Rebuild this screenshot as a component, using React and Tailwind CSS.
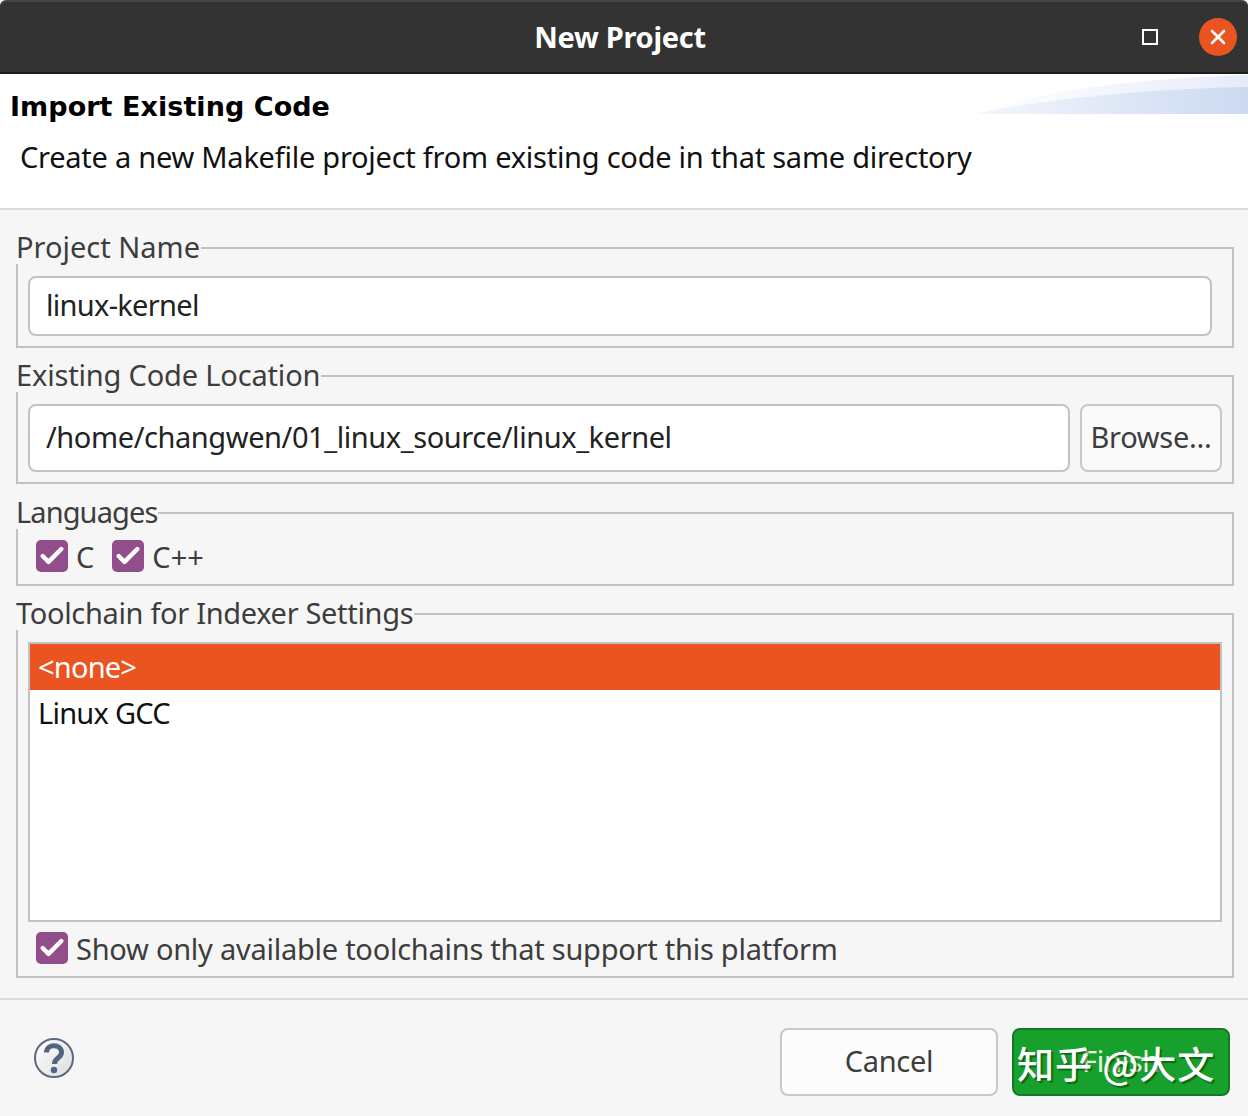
import React from 'react';
import { X, Check } from 'lucide-react';

const ui = "font-['Noto_Sans','Noto_Sans_CJK_SC',sans-serif]";

const Group = ({ title, className = '', titleClass = '', children }) => (
  <fieldset className={`border-2 border-[#c2c2c2] ${className}`}>
    <legend className={`relative -ml-0.5 h-8 bg-[#f6f6f6] pr-px text-[29px] leading-[30px] text-[#3d3d3d] ${titleClass}`}>{title}</legend>
    {children}
  </fieldset>
);

const CheckBox = ({ label, labelClass = '' }) => (
  <div className="flex h-8 items-center gap-2">
    <div className="flex h-8 w-8 items-center justify-center rounded-[5px] bg-[#924d8b]">
      <Check size={28} strokeWidth={3.8} color="#ffffff" />
    </div>
    <span className={`h-8 text-[29px] leading-[33px] text-[#3d3d3d] ${labelClass}`}>{label}</span>
  </div>
);

const App = () => {
  return (
    <div className={`relative h-[1116px] w-[1248px] overflow-hidden bg-[#f6f6f6] ${ui}`}>
      {/* title bar */}
      <div className="flex h-[74px] items-center rounded-t-[6px] border-t-2 border-b-2 border-t-[#464646] border-b-[#1d1d1d] bg-[#333333]">
        <div className="w-[110px]" />
        <div className="flex-1 text-center text-[29px] font-bold tracking-[-0.3px] text-white">New Project</div>
        <div className="flex w-[118px] items-center justify-between pr-[11px] pl-3">
          <div className="h-4 w-4 border-2 border-white" />
          <div className="flex h-[38px] w-[38px] items-center justify-center rounded-full bg-[#e95420]">
            <X size={24} strokeWidth={2.6} color="#ffffff" />
          </div>
        </div>
      </div>

      {/* wizard header */}
      <div className="relative h-[136px] border-b-2 border-[#dcdcdc] bg-white">
        <svg className="absolute top-0 right-0" width="273" height="40" viewBox="0 0 273 40">
          <defs>
            <linearGradient id="bannerTop" x1="0" x2="1" y1="0" y2="0">
              <stop offset="0" stopColor="#ffffff" />
              <stop offset="1" stopColor="#e6ecf8" />
            </linearGradient>
            <linearGradient id="bannerLow" x1="0" x2="1" y1="0" y2="0">
              <stop offset="0" stopColor="#f4f6fc" />
              <stop offset="1" stopColor="#ccd9f1" />
            </linearGradient>
          </defs>
          <path d="M0 40 C60 18 160 4 273 1 V40 Z" fill="url(#bannerTop)" />
          <path d="M0 40 C70 25 170 15 273 13 V40 Z" fill="url(#bannerLow)" />
        </svg>
        <div className="absolute top-[17px] left-[10px] font-['DejaVu_Sans',sans-serif] text-[27px] leading-8 font-bold tracking-[0.05px] text-black">Import Existing Code</div>
        <div className="absolute top-[65px] left-[20px] text-[29px] leading-9 tracking-[-0.25px] text-[#111111]">Create a new Makefile project from existing code in that same directory</div>
      </div>

      {/* form */}
      <div className="flex flex-col pt-[22px] pr-[14px] pl-4">
        <Group title="Project Name" className="pb-[10px]" titleClass="tracking-[0px]">
          <div className="mt-3 pr-5 pl-[10px]">
            <input
              readOnly
              value="linux-kernel"
              className="block h-[60px] w-full rounded-[8px] border-2 border-[#c2c2c2] bg-white px-4 pb-1 text-[29px] tracking-[-0.7px] text-[#222222] outline-none"
            />
          </div>
        </Group>

        <Group title="Existing Code Location" className="mt-3 pb-[10px]" titleClass="tracking-[-0.17px]">
          <div className="mt-3 flex gap-[10px] px-[10px]">
            <input
              readOnly
              value="/home/changwen/01_linux_source/linux_kernel"
              className="h-[68px] flex-1 rounded-[8px] border-2 border-[#c2c2c2] bg-white px-4 pb-1 text-[29px] tracking-[-0.42px] text-[#222222] outline-none"
            />
            <div className="flex h-[68px] w-[142px] items-center justify-center rounded-[8px] border-2 border-[#c8c8c8] bg-[#fafafa] pb-0.5 text-[29px] tracking-[-0.3px] text-[#3d3d3d]">Browse...</div>
          </div>
        </Group>

        <Group title="Languages" className="mt-[13px] pb-3" titleClass="tracking-[-0.9px]">
          <div className="mt-[11px] flex gap-[18px] pl-[18px]">
            <CheckBox label="C" />
            <CheckBox label="C++" />
          </div>
        </Group>

        <Group title="Toolchain for Indexer Settings" className="mt-3 pb-3" titleClass="tracking-[-0.33px]">
          <div className="mt-3 px-[10px]">
            <div className="h-[280px] border-2 border-[#c2c2c2] bg-white text-[29px] leading-[46px]">
              <div className="h-[46px] bg-[#e95420] pl-2 tracking-[-0.8px] text-white">&lt;none&gt;</div>
              <div className="h-[46px] pl-2 tracking-[-0.75px] text-[#111111]">Linux GCC</div>
            </div>
            <div className="mt-[10px] ml-2">
              <CheckBox label="Show only available toolchains that support this platform" labelClass="tracking-[-0.25px]" />
            </div>
          </div>
        </Group>
      </div>

      {/* footer */}
      <div className="mt-5 flex h-[118px] items-center border-t-2 border-[#dcdcdc] pt-2 pr-[18px] pb-0 pl-[34px]">
        <svg className="mt-[-8px]" width="40" height="40" viewBox="0 0 40 40">
          <defs>
            <linearGradient id="helpBg" x1="0" x2="1" y1="0" y2="1">
              <stop offset="0" stopColor="#ffffff" />
              <stop offset="1" stopColor="#dcdcdc" />
            </linearGradient>
          </defs>
          <circle cx="20" cy="20" r="19" fill="url(#helpBg)" stroke="#5c6a80" strokeWidth="2" />
          <path d="M12.5 14.5 C12.5 5.5 27.5 5.5 27.5 14.5 C27.5 20 20.5 19.5 20.5 26" fill="none" stroke="#52637f" strokeWidth="5" />
          <circle cx="20" cy="32" r="3.2" fill="#52637f" />
        </svg>
        <div className="ml-auto flex gap-[14px]">
          <div className="flex h-[68px] w-[218px] items-center justify-center rounded-[8px] border-2 border-[#c8c8c8] bg-[#fcfcfc] pb-0.5 text-[29px] tracking-[-0.3px] text-[#3d3d3d]">Cancel</div>
          <div className="relative flex h-[68px] w-[218px] items-center justify-center rounded-[8px] border-2 border-[#137a23] bg-[#18a02c] pb-0.5 text-[29px] tracking-[-0.3px] text-[#e6f5e6]">
            Finish
            <span className="absolute top-[8px] left-[3px] font-['Noto_Sans_CJK_SC',sans-serif] text-[37px] leading-[50px] font-medium tracking-[1px] whitespace-nowrap text-white [text-shadow:2px_2px_1px_rgba(0,60,0,0.55)]">知乎 @大文</span>
          </div>
        </div>
      </div>
    </div>
  );
};

export default App;
